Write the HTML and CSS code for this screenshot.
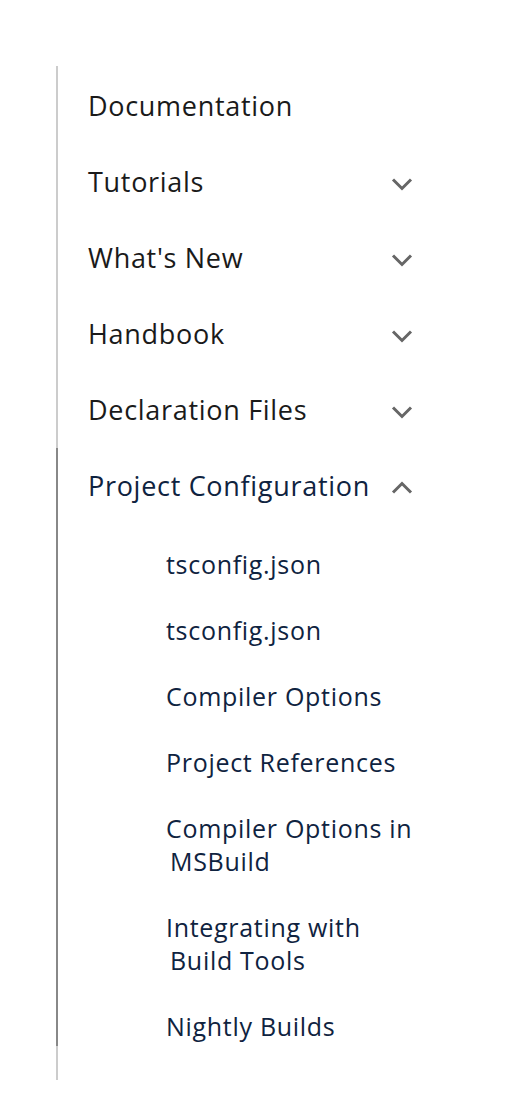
FILE: index.html
```html
<!DOCTYPE html>
<html lang="en">
<head>
<meta charset="utf-8">
<title>TypeScript Docs Navigation</title>
<link rel="stylesheet" href="styles.css">
</head>
<body>
<nav class="sidenav">
  <ul class="nav-list">
    <li class="nav-item"><a class="nav-row" href="#"><span>Documentation</span></a></li>
    <li class="nav-item"><a class="nav-row" href="#"><span>Tutorials</span>
      <svg class="chev" viewBox="0 0 22 14" width="22" height="14"><polyline points="2,2.5 11,11.5 20,2.5"/></svg></a></li>
    <li class="nav-item"><a class="nav-row" href="#"><span>What's New</span>
      <svg class="chev" viewBox="0 0 22 14" width="22" height="14"><polyline points="2,2.5 11,11.5 20,2.5"/></svg></a></li>
    <li class="nav-item"><a class="nav-row" href="#"><span>Handbook</span>
      <svg class="chev" viewBox="0 0 22 14" width="22" height="14"><polyline points="2,2.5 11,11.5 20,2.5"/></svg></a></li>
    <li class="nav-item"><a class="nav-row" href="#"><span>Declaration Files</span>
      <svg class="chev" viewBox="0 0 22 14" width="22" height="14"><polyline points="2,2.5 11,11.5 20,2.5"/></svg></a></li>
    <li class="nav-item open"><a class="nav-row active" href="#"><span>Project Configuration</span>
      <svg class="chev" viewBox="0 0 22 14" width="22" height="14"><polyline points="2,11.5 11,2.5 20,11.5"/></svg></a>
      <ul class="sub-list">
        <li><a class="sub-link" href="#">tsconfig.json</a></li>
        <li><a class="sub-link" href="#">tsconfig.json</a></li>
        <li><a class="sub-link" href="#">Compiler Options</a></li>
        <li><a class="sub-link" href="#">Project References</a></li>
        <li><a class="sub-link" href="#">Compiler Options in MSBuild</a></li>
        <li><a class="sub-link" href="#">Integrating with Build Tools</a></li>
        <li><a class="sub-link" href="#">Nightly Builds</a></li>
      </ul>
    </li>
  </ul>
</nav>
</body>
</html>
```

FILE: styles.css
```css
html, body {
  margin: 0;
  padding: 0;
  background: #ffffff;
}

body {
  font-family: "Open Sans", "Noto Sans", sans-serif;
}

.sidenav {
  margin: 66px 0 0 56px;
  width: 366px;
  border-left: 2px solid #cccccc;
  padding-bottom: 34px;
}

.nav-list,
.sub-list {
  list-style: none;
  margin: 0;
  padding: 0;
}

.nav-list {
  padding-top: 2px;
}

.nav-row {
  display: flex;
  align-items: center;
  justify-content: space-between;
  height: 76px;
  padding: 0 11px 0 30px;
  font-size: 27px;
  letter-spacing: 0.7px;
  color: #1a1a1a;
  text-decoration: none;
}

.nav-row > span {
  line-height: 1;
  margin-top: -2px;
}

.nav-row.active {
  color: #0f2340;
}

.chev {
  flex: none;
  margin-top: 4px;
  fill: none;
  stroke: #666666;
  stroke-width: 3;
}

.nav-item.open {
  border-left: 2px solid #888888;
  margin-left: -2px;
}

.sub-list {
  display: flex;
  flex-direction: column;
  gap: 33px;
  padding: 24px 0 3px 108px;
}

.sub-link {
  display: block;
  padding-left: 4px;
  text-indent: -4px;
  font-size: 25px;
  letter-spacing: 0.7px;
  line-height: 33px;
  color: #0f2340;
  text-decoration: none;
}
```
